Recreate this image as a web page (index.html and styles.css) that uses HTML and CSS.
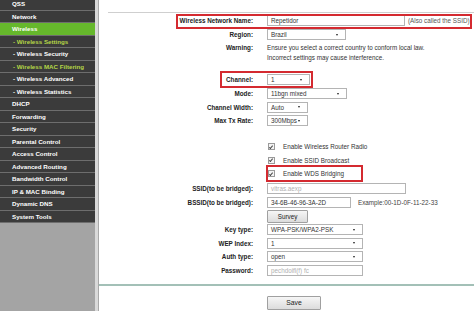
FILE: index.html
```html
<!DOCTYPE html>
<html lang="en">
<head>
    <meta charset="UTF-8">
    <title>Wireless Settings</title>
    <link rel="stylesheet" href="styles.css">
</head>
<body>
    <div class="page">
        <!-- Левое меню -->
        <div class="sidebar">
            <ul class="menu">
                <li>QSS</li>
                <li>Network</li>
                <li class="active">Wireless</li>
                <li class="sub on">- Wireless Settings</li>
                <li class="sub">- Wireless Security</li>
                <li class="sub on">- Wireless MAC Filtering</li>
                <li class="sub">- Wireless Advanced</li>
                <li class="sub">- Wireless Statistics</li>
                <li>DHCP</li>
                <li>Forwarding</li>
                <li>Security</li>
                <li>Parental Control</li>
                <li>Access Control</li>
                <li>Advanced Routing</li>
                <li>Bandwidth Control</li>
                <li>IP &amp; MAC Binding</li>
                <li>Dynamic DNS</li>
                <li>System Tools</li>
            </ul>
        </div>

        <!-- Основная форма -->
        <div class="main">
            <div class="topline"></div>

            <div class="row first mark-name">
                <div class="label">Wireless Network Name:</div>
                <div class="field">
                    <span class="input w138">Repetidor</span>
                    <span class="note">(Also called the SSID)</span>
                </div>
            </div>
            <div class="row">
                <div class="label">Region:</div>
                <div class="field"><span class="sel w79">Brazil</span></div>
            </div>
            <div class="row warning">
                <div class="label">Warning:</div>
                <div class="field text">Ensure you select a correct country to conform local law.<br>Incorrect settings may cause interference.</div>
            </div>

            <div class="row gap-channel mark-channel">
                <div class="label">Channel:</div>
                <div class="field"><span class="sel w43">1</span></div>
            </div>
            <div class="row">
                <div class="label">Mode:</div>
                <div class="field"><span class="sel w80">11bgn mixed</span></div>
            </div>
            <div class="row">
                <div class="label">Channel Width:</div>
                <div class="field"><span class="sel w41">Auto</span></div>
            </div>
            <div class="row">
                <div class="label">Max Tx Rate:</div>
                <div class="field"><span class="sel w41">300Mbps</span></div>
            </div>

            <div class="row check gap-check">
                <div class="label"></div>
                <div class="field"><span class="cb"></span>Enable Wireless Router Radio</div>
            </div>
            <div class="row check">
                <div class="label"></div>
                <div class="field"><span class="cb"></span>Enable SSID Broadcast</div>
            </div>
            <div class="row check mark-wds">
                <div class="label"></div>
                <div class="field"><span class="cb"></span>Enable WDS Bridging</div>
            </div>

            <div class="row gap-ssid">
                <div class="label">SSID(to be bridged):</div>
                <div class="field"><span class="input w139 dim">vitras.aexp</span></div>
            </div>
            <div class="row">
                <div class="label">BSSID(to be bridged):</div>
                <div class="field">
                    <span class="input w84">34-6B-46-96-3A-2D</span>
                    <span class="example">Example:00-1D-0F-11-22-33</span>
                </div>
            </div>
            <div class="row">
                <div class="label"></div>
                <div class="field"><span class="btn survey">Survey</span></div>
            </div>
            <div class="row">
                <div class="label">Key type:</div>
                <div class="field"><span class="sel w96">WPA-PSK/WPA2-PSK</span></div>
            </div>
            <div class="row">
                <div class="label">WEP Index:</div>
                <div class="field"><span class="sel w96">1</span></div>
            </div>
            <div class="row">
                <div class="label">Auth type:</div>
                <div class="field"><span class="sel w96">open</span></div>
            </div>
            <div class="row">
                <div class="label">Password:</div>
                <div class="field"><span class="input w96 dim">pechdoifl(f) fc</span></div>
            </div>

            <div class="bottomline"></div>

            <div class="actions">
                <span class="btn save">Save</span>
            </div>
        </div>
    </div>
</body>
</html>
```

FILE: styles.css
```css
body {
    margin: 0;
    font-family: 'Liberation Sans', Arial, sans-serif;
    color: #333;
    background: #fff;
}

.page {
    display: flex;
    width: 474px;
    height: 311px;
    overflow: hidden;
}

/* Меню слева */
.sidebar {
    width: 95px;
    flex: none;
    background: #a4a4a4;
    border-right: 3px solid #d9d9d9;
}

.menu {
    list-style: none;
    margin: -2px 0 0 0;
    padding: 0;
}

.menu li {
    height: 11.5px;
    line-height: 11.5px;
    border-bottom: 1px solid #6e6e6e;
    background: #3b3b3b;
    color: #fff;
    font-size: 6.2px;
    font-weight: bold;
    padding-left: 12px;
    white-space: nowrap;
}

.menu li.active {
    background: #66b82c;
}

.menu li.sub {
    padding-left: 13px;
}

.menu li.on {
    color: #b4d647;
}

/* Основная часть */
.main {
    flex: 1;
    border-left: 1px solid #a8a8a8;
    position: relative;
    font-size: 6.3px;
}

.topline {
    height: 1px;
    margin: 12px 0 0 9px;
    background: #cfcfcf;
}

.row {
    display: grid;
    grid-template-columns: 168px 1fr;
    height: 13.6px;
    align-items: center;
    position: relative;
}

.row.first { margin-top: 1.2px; }
.row.gap-channel { margin-top: 7.8px; }
.row.gap-check { margin-top: 12.6px; }
.row.gap-ssid { margin-top: 1.5px; }
.row.check { height: 13.5px; }

.label {
    text-align: right;
    padding-right: 14px;
    font-weight: bold;
    color: #222;
    white-space: nowrap;
}

.field {
    display: flex;
    align-items: center;
    white-space: nowrap;
}

.row.warning {
    height: 24px;
    align-items: start;
}

.row.warning .label {
    line-height: 10px;
    padding-top: 1.6px;
}

.field.text {
    display: block;
    line-height: 10px;
    padding-top: 1.6px;
    color: #333;
}

.input,
.sel {
    display: inline-block;
    box-sizing: border-box;
    height: 11px;
    line-height: 9px;
    border: 1px solid #b4b4b4;
    background: #fff;
    padding-left: 3px;
    color: #333;
    position: relative;
}

.sel::after {
    content: "";
    position: absolute;
    right: 7px;
    top: 3.5px;
    border-left: 1.6px solid transparent;
    border-right: 1.6px solid transparent;
    border-top: 2.5px solid #222;
}

.dim { color: #b0b0b0; }

.w41 { width: 41px; }
.w43 { width: 43px; }
.w79 { width: 79px; }
.w80 { width: 80px; }
.w84 { width: 84px; }
.w96 { width: 96px; }
.w138 { width: 138px; }
.w139 { width: 139px; }

.note {
    margin-left: 3px;
    color: #555;
}

.example {
    margin-left: 7px;
    color: #444;
}

.cb {
    display: inline-block;
    width: 5px;
    height: 5px;
    border: 1px solid #9a9a9a;
    background: #f4f4f4;
    margin: 0 8px 0 1px;
    position: relative;
}

.cb::after {
    content: "";
    position: absolute;
    left: 1.2px;
    top: 0.3px;
    width: 1.4px;
    height: 2.8px;
    border: solid #444;
    border-width: 0 1px 1px 0;
    transform: rotate(40deg);
}

.btn {
    display: inline-block;
    box-sizing: border-box;
    text-align: center;
    border: 1px solid #a0a0a0;
    border-radius: 1px;
    background: linear-gradient(#f6f6f6, #dcdcdc);
    color: #222;
}

.survey {
    width: 41px;
    height: 13px;
    line-height: 11px;
}

.bottomline {
    height: 2px;
    margin-top: 6.6px;
    background: #a3c0b7;
}

.actions {
    padding: 10px 0 0 168px;
}

.save {
    width: 54px;
    height: 14px;
    line-height: 12px;
    font-size: 6.8px;
}

/* Красные рамки-пометки поверх строк */
.mark-name::after,
.mark-channel::after,
.mark-wds::after {
    content: "";
    position: absolute;
    box-sizing: border-box;
    border: 2px solid #d42a30;
    pointer-events: none;
}

.mark-name::after {
    left: 77px;
    right: 2px;
    top: -0.5px;
    height: 15px;
}

.mark-channel::after {
    left: 121px;
    width: 93px;
    top: -2px;
    height: 17px;
}

.mark-wds::after {
    left: 167px;
    width: 97px;
    top: -2px;
    height: 17px;
}
```
